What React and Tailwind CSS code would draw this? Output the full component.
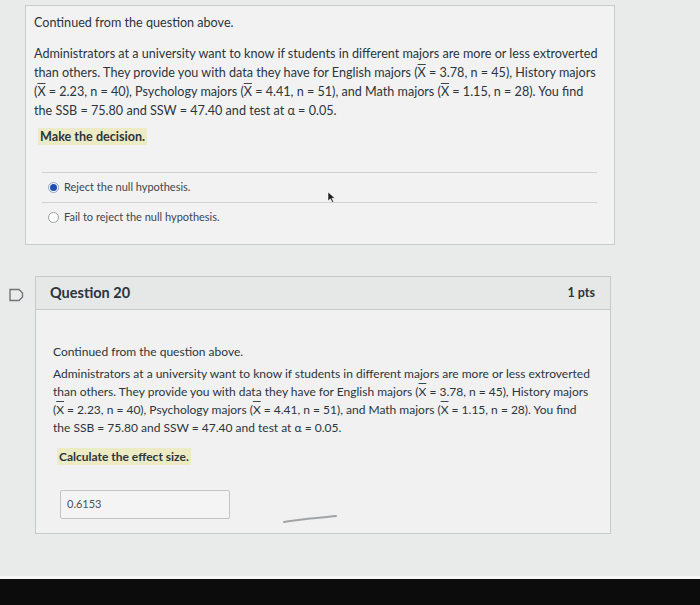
import React from 'react';

const font = { fontFamily: 'Lato, "Noto Sans", sans-serif' };

const Xbar = () => <span className="overline decoration-[#3a4650]">X</span>;

const QuestionText = ({ tail, paraGap, tailGap }) => (
  <>
    <p className="whitespace-nowrap">Continued from the question above.</p>
    <p className={`whitespace-nowrap ${paraGap}`}>
      Administrators at a university want to know if students in different majors are more or less extroverted
      <br />
      than others. They provide you with data they have for English majors (<Xbar /> = 3.78, n = 45), History majors
      <br />
      (<Xbar /> = 2.23, n = 40), Psychology majors (<Xbar /> = 4.41, n = 51), and Math majors (<Xbar /> = 1.15, n = 28). You find
      <br />
      the SSB = 75.80 and SSW = 47.40 and test at α = 0.05.
    </p>
    <p className={`pl-[4px] ${tailGap}`}>
      <span className="bg-[#ecebc4] font-bold px-[2px] py-[1px]">{tail}</span>
    </p>
  </>
);

const Radio = ({ checked, label }) => (
  <div className="flex items-center h-[29px] pl-[6px]">
    {checked ? (
      <span className="w-[11px] h-[11px] rounded-full border border-[#8aa4c8] bg-white flex items-center justify-center">
        <span className="w-[7px] h-[7px] rounded-full bg-[#1d4fb0]"></span>
      </span>
    ) : (
      <span className="w-[11px] h-[11px] rounded-full border border-[#9a9fa3] bg-white"></span>
    )}
    <span className="ml-[5px] text-[11px] text-[#3c4650]">{label}</span>
  </div>
);

export default function App() {
  return (
    <div className="relative w-[700px] h-[605px] bg-[#e9eaea] flex flex-col overflow-hidden" style={font}>
      <div className="ml-[25px] mt-[5px] w-[590px] h-[240px] bg-[#f2f2f2] border border-[#c9cbcc] flex flex-col">
        <div className="pl-[8px] pr-[10px] pt-[7px] text-[12.6px] leading-[19px] text-[#2b353d]">
          <QuestionText tail="Make the decision." paraGap="mt-3" tailGap="mt-[7px]" />
        </div>
        <div className="ml-[16px] mr-[17px] mt-[26px] border-t border-[#cfd1d2]">
          <Radio checked label="Reject the null hypothesis." />
        </div>
        <div className="ml-[16px] mr-[17px] border-t border-[#cfd1d2]">
          <Radio label="Fail to reject the null hypothesis." />
        </div>
      </div>

      <div className="flex mt-[31px]">
        <div className="w-[35px] pt-[12px] pl-[9px]">
          <svg width="15" height="14" viewBox="0 0 15 14" fill="none" stroke="#6f7579" strokeWidth="1.4">
            <path d="M1 1.5 H10 L13.5 5 V9 L10 12.5 H1 Z" />
          </svg>
        </div>
        <div className="w-[576px] h-[258px] bg-[#f1f1f1] border border-[#c6c8c9] flex flex-col">
          <div className="h-[33px] bg-[#e6e7e7] border-b border-[#c6c8c9] flex items-center justify-between pl-[14px] pr-[15px]">
            <span className="text-[14.5px] font-bold text-[#2b353d]">Question 20</span>
            <span className="text-[12.5px] font-bold text-[#2b353d]">1 pts</span>
          </div>
          <div className="pl-[17px] pr-[10px] pt-[33px] text-[12px] leading-[18px] text-[#2b353d]">
            <QuestionText tail="Calculate the effect size." paraGap="mt-[4px]" tailGap="mt-[11px]" />
          </div>
          <div className="ml-[24px] mt-[24px] w-[170px] h-[29px] bg-[#f4f4f4] border border-[#c2c4c5] rounded-[2px] flex items-center pl-[6px] text-[11px] text-[#4a535a]">
            0.6153
          </div>
        </div>
      </div>

      <div className="mt-auto h-[3px] bg-[#f6f6f6]"></div>
      <div className="h-[26px] bg-[#0c0c0d]"></div>

      <svg className="absolute left-[327px] top-[191px]" width="9" height="12" viewBox="0 0 9 12">
        <path d="M1 1 L1 10 L3.4 7.8 L5.2 11.4 L6.6 10.7 L4.9 7.2 L8 7.2 Z" fill="#1b1b1b" stroke="#ffffff" strokeWidth="0.6" />
      </svg>
      <svg className="absolute left-[282px] top-[514px]" width="56" height="10" viewBox="0 0 56 10">
        <path d="M2 8 C18 5 36 4 54 2" stroke="#8d9194" strokeWidth="2" strokeLinecap="round" fill="none" opacity="0.8" />
      </svg>
    </div>
  );
}
